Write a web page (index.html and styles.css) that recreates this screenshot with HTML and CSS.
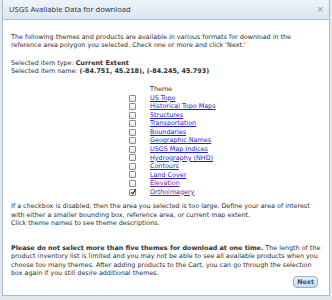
FILE: index.html
```html
<!DOCTYPE html>
<html>
<head>
<meta charset="utf-8">
<link rel="stylesheet" href="styles.css">
</head>
<body>
<div class="dialog">
  <div class="titlebar">
    <span class="title">USGS Available Data for download</span>
    <span class="close">×</span>
  </div>
  <div class="content">
    <p class="intro">The following themes and products are available in various formats for download in the reference area polygon you selected. Check one or more and click 'Next.'</p>
    <p class="selected">Selected item type: <b>Current Extent</b><br>Selected item name: <b>(-84.751, 45.218), (-84.245, 45.793)</b></p>
    <table class="themes">
      <tr><th></th><th class="th">Theme</th></tr>
      <tr><td><input type="checkbox"></td><td><a href="#">US Topo</a></td></tr>
      <tr><td><input type="checkbox"></td><td><a href="#">Historical Topo Maps</a></td></tr>
      <tr><td><input type="checkbox"></td><td><a href="#">Structures</a></td></tr>
      <tr><td><input type="checkbox"></td><td><a href="#">Transportation</a></td></tr>
      <tr><td><input type="checkbox"></td><td><a href="#">Boundaries</a></td></tr>
      <tr><td><input type="checkbox"></td><td><a href="#">Geographic Names</a></td></tr>
      <tr><td><input type="checkbox"></td><td><a href="#">USGS Map Indices</a></td></tr>
      <tr><td><input type="checkbox"></td><td><a href="#">Hydrography (NHD)</a></td></tr>
      <tr><td><input type="checkbox"></td><td><a href="#">Contours</a></td></tr>
      <tr><td><input type="checkbox"></td><td><a href="#">Land Cover</a></td></tr>
      <tr><td><input type="checkbox"></td><td><a class="visited" href="#">Elevation</a></td></tr>
      <tr><td><input type="checkbox" checked></td><td><a class="visited" href="#">Orthoimagery</a></td></tr>
    </table>
    <p class="note">If a checkbox is disabled, then the area you selected is too large. Define your area of interest with either a smaller bounding box, reference area, or current map extent.<br>Click theme names to see theme descriptions.</p>
    <p class="warn"><b>Please do not select more than five themes for download at one time.</b> The length of the product inventory list is limited and you may not be able to see all available products when you choose too many themes. After adding products to the Cart, you can go through the selection box again if you still desire additional themes.</p>
    <div class="actions"><button class="next">Next</button></div>
  </div>
</div>
</body>
</html>
```
FILE: styles.css
```css
html, body {
  margin: 0;
  padding: 0;
  background: #e4e8ec;
}
body {
  font-family: "DejaVu Sans", Verdana, sans-serif;
  color: #2e2e2e;
}
.dialog {
  margin: 0 2px 0 2px;
  height: 296px;
  box-sizing: border-box;
  border: 1px solid #a9bbcf;
  border-top: none;
  background: #fff;
  display: flex;
  flex-direction: column;
}
.titlebar {
  height: 18px;
  flex: none;
  display: flex;
  align-items: center;
  justify-content: space-between;
  padding: 0 5px 1px 6px;
  background: linear-gradient(#eef4fa, #d9e6f3);
  border-bottom: 1px solid #aec2d8;
}
.title {
  font-family: "Noto Sans", "DejaVu Sans", sans-serif;
  font-size: 7.6px;
  color: #3a3a3a;
}
.close {
  font-size: 9px;
  color: #8a94a0;
}
.content {
  flex: 1;
  padding: 13px 7px 0 8px;
  font-size: 6.4px;
  line-height: 8.3px;
  display: flex;
  flex-direction: column;
}
p {
  margin: 0;
}
.selected {
  margin-top: 9px;
}
.themes {
  border-collapse: collapse;
  margin: 10px 0 0 118px;
}
.themes th, .themes td {
  padding: 0;
  font-weight: normal;
  text-align: left;
  line-height: 8.55px;
  height: 8.55px;
}
.themes input {
  appearance: none;
  -webkit-appearance: none;
  margin: 0 1px 0 0;
  width: 7px;
  height: 7px;
  display: block;
  box-sizing: border-box;
  border: 1px solid #8c8c8c;
  border-radius: 1px;
  background: linear-gradient(#ffffff, #e6e6e6);
  position: relative;
}
.themes input:checked::after {
  content: "";
  position: absolute;
  left: 1.5px;
  top: -2px;
  width: 2px;
  height: 5px;
  border: solid #222;
  border-width: 0 1.3px 1.3px 0;
  transform: rotate(35deg);
}
a {
  color: #1e1ed8;
}
a.visited {
  color: #5a2a9a;
}
.note {
  margin-top: 6px;
}
.warn {
  margin-top: 17px;
}
.actions {
  display: flex;
  justify-content: flex-end;
  margin-top: -1px;
  padding-right: 4px;
}
.next {
  font-family: "DejaVu Sans", Verdana, sans-serif;
  font-size: 6.4px;
  font-weight: bold;
  color: #3a4a5c;
  padding: 0 3px;
  height: 12px;
  border: 1px solid #9ab0c8;
  border-radius: 4px;
  background: linear-gradient(#e8f0fa, #c9dbef);
}
```
